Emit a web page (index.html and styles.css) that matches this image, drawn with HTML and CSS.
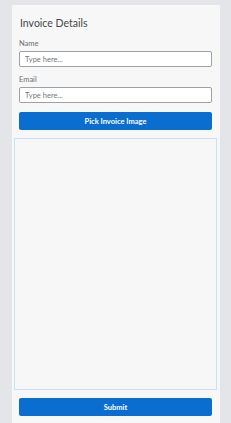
FILE: index.html
```html
<!DOCTYPE html>
<html lang="en">
<head>
  <meta charset="UTF-8">
  <meta name="viewport" content="width=device-width, initial-scale=1.0">
  <title>Invoice Details</title>
  <link rel="stylesheet" href="styles.css">
</head>
<body>
  <div class="card">
    <h2>Invoice Details</h2>

    <div class="form-group">
      <label for="name">Name</label>
      <input type="text" id="name" placeholder="Type here...">
    </div>
    <div class="form-group">
      <label for="email">Email</label>
      <input type="text" id="email" placeholder="Type here...">
    </div>

    <button class="btn">Pick Invoice Image</button>

    <!-- Image preview area -->
    <div class="preview"></div>

    <button class="btn submit">Submit</button>
  </div>
</body>
</html>
```

FILE: styles.css
```css
body {
  font-family: 'Lato', 'Liberation Sans', sans-serif;
  background-color: #e4e5e9;
  margin: 0;
  height: 423px;
  overflow: hidden;
}

.card {
  background: #f7f7f7;
  margin: 5px 0 0 12px;
  width: 208px;
  height: 418px;
  padding: 9px 8px 0 7px;
  box-sizing: border-box;
}

h2 {
  font-size: 10.5px;
  font-weight: normal;
  line-height: 16px;
  margin: 1px 0 7px 1px;
  color: #45484b;
}

.form-group {
  margin-bottom: 7px;
}

label {
  display: block;
  font-size: 7.5px;
  line-height: 11px;
  margin-bottom: 2px;
  color: #6a6d70;
}

input {
  display: block;
  width: 100%;
  height: 16px;
  padding: 0 5px;
  border: 1px solid #9da2a7;
  border-radius: 2px;
  background: #fff;
  font-family: inherit;
  font-size: 7.5px;
  color: #32363a;
  box-sizing: border-box;
}

input::placeholder {
  color: #74777a;
}

.btn {
  display: block;
  width: 100%;
  height: 18px;
  margin-top: 9px;
  padding: 0;
  background-color: #0a6ed1;
  color: #fff;
  border: none;
  border-radius: 2px;
  font-family: inherit;
  font-size: 7.5px;
  font-weight: bold;
}

.preview {
  margin: 8px -5px 0 -5px;
  height: 252px;
  border: 1px solid #c6e5f3;
  background: #f7f7f7;
  box-sizing: border-box;
}

.submit {
  margin-top: 8px;
}
```
